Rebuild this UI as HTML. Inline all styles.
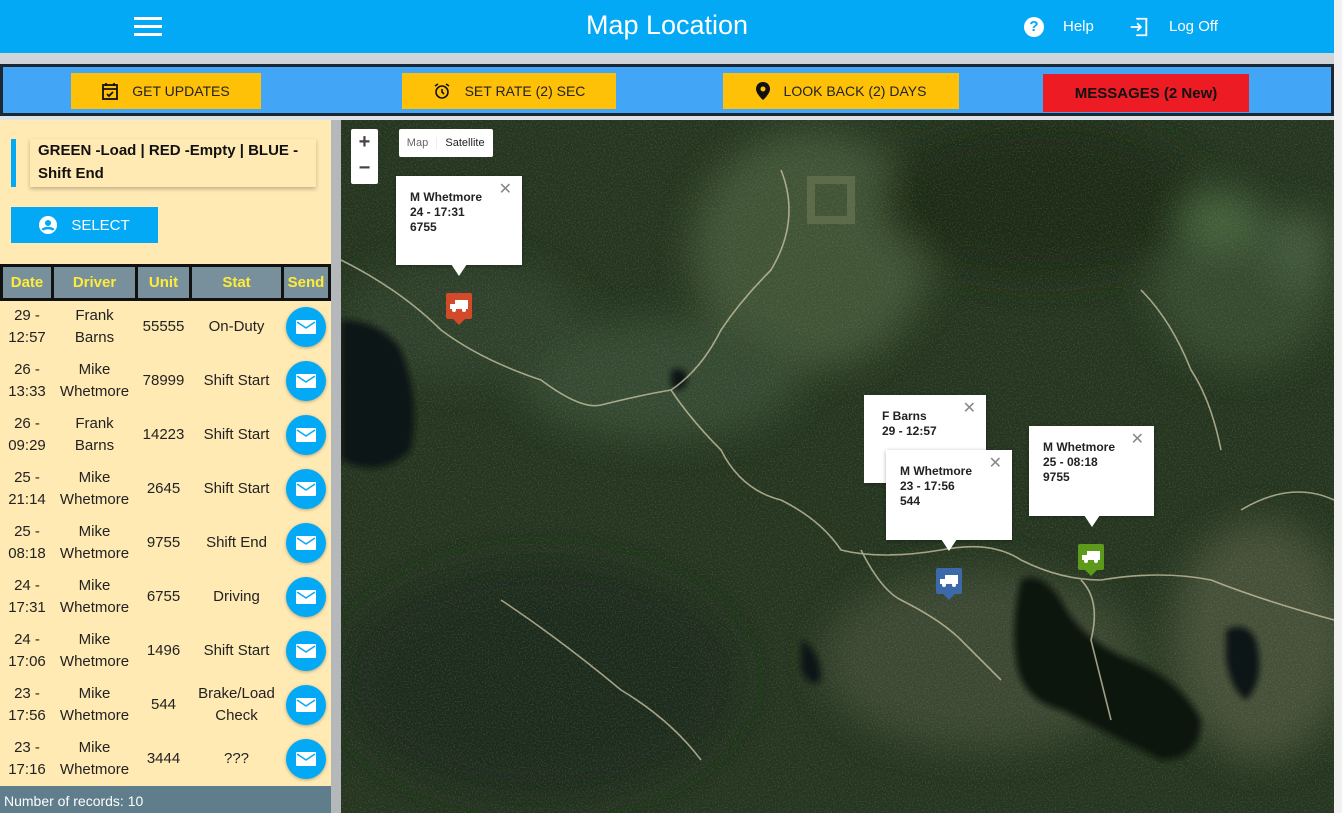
<!DOCTYPE html>
<html><head><meta charset="utf-8"><style>
*{box-sizing:border-box;margin:0;padding:0}
body{width:1342px;height:813px;overflow:hidden;font-family:"Liberation Sans",sans-serif;background:#fff;position:relative}
.hdr{position:absolute;left:0;top:0;width:1334px;height:53px;background:#03a9f4;color:#fff}
.gray{position:absolute;left:0;top:53px;width:1334px;height:11px;background:#cfd4d8}
.tb{position:absolute;left:0;top:64px;width:1334px;height:52px;background:#42a5f5;border:3px solid #1b2733}
.btn{position:absolute;top:6px;height:36px;background:#ffc107;color:#222;font-size:14px;display:flex;align-items:center;justify-content:center;gap:14px}
.strip{position:absolute;left:0;top:116px;width:1334px;height:4px;background:#dde3e6}
.left{position:absolute;left:0;top:120px;width:331px;height:693px;background:#ffeab3}
.div{position:absolute;left:331px;top:120px;width:10px;height:693px;background:#b5b8ba}
.map{position:absolute;left:341px;top:120px;width:993px;height:693px;overflow:hidden;background:#2a3a26}
.sb{position:absolute;left:1334px;top:0;width:8px;height:813px;background:#f1f1f1}
table{position:absolute;left:0;top:144px;width:331px;border-collapse:collapse;font-size:15px;color:#222}
th{background:#78909c;color:#ffeb3b;height:34px;border:3px solid #111;font-size:15px}
td{height:54px;text-align:center;line-height:22px}
.mail{width:40px;height:40px;border-radius:50%;background:#03a9f4;display:inline-flex;align-items:center;justify-content:center;box-shadow:0 1px 3px rgba(0,0,0,.3)}
.pop{position:absolute;background:#fff;font-size:12px;font-weight:bold;color:#222;line-height:15px;padding:14px 14px;box-shadow:0 1px 4px rgba(0,0,0,.3)}
.pop .x{position:absolute;right:10px;top:6px;color:#888;font-size:16px;font-weight:normal}
.pop:after{content:"";position:absolute;left:50%;bottom:-11px;margin-left:-8px;border-left:8px solid transparent;border-right:8px solid transparent;border-top:12px solid #fff}
.mk{position:absolute;width:26px;height:26px;border-radius:2px;display:flex;align-items:center;justify-content:center}
.mk i{position:absolute;left:7px;bottom:-6px;width:0;height:0;border-left:6px solid transparent;border-right:6px solid transparent;border-top:6px solid}
</style></head><body>
<div class="hdr">
 <div style="position:absolute;left:134px;top:17px;width:28px;height:3px;background:#fff;box-shadow:0 8px 0 #fff,0 16px 0 #fff"></div>
 <div style="position:absolute;left:0;width:1334px;top:10px;text-align:center;font-size:27px">Map Location</div>
 <div style="position:absolute;left:1024px;top:17px;width:20px;height:20px;border-radius:50%;background:#fff;color:#03a9f4;font-weight:bold;font-size:15px;text-align:center;line-height:20px">?</div>
 <div style="position:absolute;left:1063px;top:18px;font-size:15px">Help</div>
 <svg style="position:absolute;left:1128px;top:16px" width="22" height="22" viewBox="0 0 24 24" fill="none" stroke="#fff" stroke-width="2"><path d="M9 3h11v18H9M3 12h11M10 8l4 4-4 4"/></svg>
 <div style="position:absolute;left:1169px;top:18px;font-size:15px">Log Off</div>
</div>
<div class="gray"></div>
<div class="tb">
 <div class="btn" style="left:68px;width:190px"><svg width="16" height="18" viewBox="0 0 16 18" fill="none" stroke="#111" stroke-width="1.8"><rect x="1" y="3" width="14" height="14"/><path d="M1 7h14M4 1v3M12 1v3M5 12l2 2 4-4"/></svg>GET UPDATES</div>
 <div class="btn" style="left:399px;width:214px"><svg width="18" height="18" viewBox="0 0 18 18" fill="none" stroke="#111" stroke-width="1.6"><circle cx="9" cy="10" r="6"/><path d="M9 7v3l2 2M2 4l3-2M16 4l-3-2"/></svg>SET RATE (2) SEC</div>
 <div class="btn" style="left:720px;width:236px"><svg width="14" height="18" viewBox="0 0 14 18"><path d="M7 0C3 0 0 3 0 7c0 5 7 11 7 11s7-6 7-11c0-4-3-7-7-7z" fill="#111"/><circle cx="7" cy="7" r="2.5" fill="#ffc107"/></svg>LOOK BACK (2) DAYS</div>
 <div class="btn" style="left:1040px;width:206px;top:7px;height:38px;background:#ed1c24;color:#111;font-weight:bold;font-size:15px">MESSAGES (2 New)</div>
</div>
<div class="strip"></div>
<div class="left">
 <div style="position:absolute;left:11px;top:19px;width:5px;height:48px;background:#03a9f4"></div>
 <div style="position:absolute;left:30px;top:19px;width:286px;height:48px;background:#ffeab3;box-shadow:0 2px 4px rgba(0,0,0,.25);font-weight:bold;font-size:15px;line-height:23px;padding:0 8px;color:#111">GREEN -Load | RED -Empty | BLUE - Shift End</div>
 <div style="position:absolute;left:11px;top:87px;width:147px;height:36px;background:#03a9f4;color:#fff;font-size:15px;display:flex;align-items:center;justify-content:center;gap:14px"><svg width="18" height="18" viewBox="0 0 18 18"><circle cx="9" cy="9" r="9" fill="#fff"/><circle cx="9" cy="7" r="3" fill="#03a9f4"/><path d="M3.5 14c1.5-2.5 9.5-2.5 11 0" stroke="#03a9f4" stroke-width="2.5" fill="none"/></svg>SELECT</div>
 <table>
 <tr><th style="width:51px">Date</th><th style="width:84px">Driver</th><th style="width:54px">Unit</th><th style="width:92px">Stat</th><th>Send</th></tr>
 <tr><td>29 -<br>12:57</td><td>Frank<br>Barns</td><td>55555</td><td>On-Duty</td><td><span class="mail"><svg width="20" height="14"><rect width="20" height="14" rx="1" fill="#fff"/><path d="M1 2l9 6 9-6" stroke="#03a9f4" stroke-width="1.5" fill="none"/></svg></span></td></tr>
 <tr><td>26 -<br>13:33</td><td>Mike<br>Whetmore</td><td>78999</td><td>Shift Start</td><td><span class="mail"><svg width="20" height="14"><rect width="20" height="14" rx="1" fill="#fff"/><path d="M1 2l9 6 9-6" stroke="#03a9f4" stroke-width="1.5" fill="none"/></svg></span></td></tr>
 <tr><td>26 -<br>09:29</td><td>Frank<br>Barns</td><td>14223</td><td>Shift Start</td><td><span class="mail"><svg width="20" height="14"><rect width="20" height="14" rx="1" fill="#fff"/><path d="M1 2l9 6 9-6" stroke="#03a9f4" stroke-width="1.5" fill="none"/></svg></span></td></tr>
 <tr><td>25 -<br>21:14</td><td>Mike<br>Whetmore</td><td>2645</td><td>Shift Start</td><td><span class="mail"><svg width="20" height="14"><rect width="20" height="14" rx="1" fill="#fff"/><path d="M1 2l9 6 9-6" stroke="#03a9f4" stroke-width="1.5" fill="none"/></svg></span></td></tr>
 <tr><td>25 -<br>08:18</td><td>Mike<br>Whetmore</td><td>9755</td><td>Shift End</td><td><span class="mail"><svg width="20" height="14"><rect width="20" height="14" rx="1" fill="#fff"/><path d="M1 2l9 6 9-6" stroke="#03a9f4" stroke-width="1.5" fill="none"/></svg></span></td></tr>
 <tr><td>24 -<br>17:31</td><td>Mike<br>Whetmore</td><td>6755</td><td>Driving</td><td><span class="mail"><svg width="20" height="14"><rect width="20" height="14" rx="1" fill="#fff"/><path d="M1 2l9 6 9-6" stroke="#03a9f4" stroke-width="1.5" fill="none"/></svg></span></td></tr>
 <tr><td>24 -<br>17:06</td><td>Mike<br>Whetmore</td><td>1496</td><td>Shift Start</td><td><span class="mail"><svg width="20" height="14"><rect width="20" height="14" rx="1" fill="#fff"/><path d="M1 2l9 6 9-6" stroke="#03a9f4" stroke-width="1.5" fill="none"/></svg></span></td></tr>
 <tr><td>23 -<br>17:56</td><td>Mike<br>Whetmore</td><td>544</td><td>Brake/Load<br>Check</td><td><span class="mail"><svg width="20" height="14"><rect width="20" height="14" rx="1" fill="#fff"/><path d="M1 2l9 6 9-6" stroke="#03a9f4" stroke-width="1.5" fill="none"/></svg></span></td></tr>
 <tr><td>23 -<br>17:16</td><td>Mike<br>Whetmore</td><td>3444</td><td>???</td><td><span class="mail"><svg width="20" height="14"><rect width="20" height="14" rx="1" fill="#fff"/><path d="M1 2l9 6 9-6" stroke="#03a9f4" stroke-width="1.5" fill="none"/></svg></span></td></tr>
 </table>
 <div style="position:absolute;left:0;top:666px;width:331px;height:27px;background:#607d8b;color:#fff;font-size:14px;padding:7px 4px">Number of records: 10</div>
</div>
<div class="div"></div>
<div class="map">
 <svg width="993" height="693" style="position:absolute;left:0;top:0">
  <defs><filter id="b"><feGaussianBlur stdDeviation="18"/></filter><filter id="s"><feGaussianBlur stdDeviation="3"/></filter>
  <filter id="n"><feTurbulence type="fractalNoise" baseFrequency="0.7" numOctaves="2" seed="3"/><feColorMatrix values="0 0 0 0 0.35  0 0 0 0 0.45  0 0 0 0 0.28  0 0 0 0.6 -0.28"/></filter></defs>
  <rect width="993" height="693" fill="#24341f"/>
  <g filter="url(#b)">
   <ellipse cx="470" cy="130" rx="120" ry="120" fill="#3f5234"/>
   <ellipse cx="320" cy="260" rx="140" ry="60" fill="#354830"/>
   <ellipse cx="900" cy="170" rx="90" ry="80" fill="#35492f"/>
   <ellipse cx="120" cy="200" rx="120" ry="60" fill="#2f3f2a"/>
   <ellipse cx="640" cy="540" rx="160" ry="90" fill="#3b4633"/>
   <ellipse cx="200" cy="560" rx="200" ry="120" fill="#1d2a1a"/>
   <ellipse cx="920" cy="520" rx="90" ry="120" fill="#454f38"/>
   <ellipse cx="700" cy="80" rx="160" ry="80" fill="#1d2a19"/>
   <ellipse cx="880" cy="100" rx="40" ry="30" fill="#45603a"/>
   <ellipse cx="960" cy="130" rx="30" ry="40" fill="#42593a"/>
  </g>
  <rect width="993" height="693" filter="url(#n)"/>
  <g filter="url(#s)">
   <path d="M0 200 Q40 200 60 230 Q80 280 70 330 Q40 360 0 340Z" fill="#0d1612"/>
   <path d="M680 460 Q700 450 720 480 Q740 520 790 540 Q840 560 860 600 Q860 640 820 640 Q780 620 720 590 Q680 580 675 540 Q670 500 680 460Z" fill="#0b1510"/>
   <path d="M885 510 Q905 500 915 520 Q925 560 905 580 Q890 570 885 540Z" fill="#0e1812"/>
   <path d="M460 520 Q480 530 480 560 Q470 570 460 550Z" fill="#0e1812"/>
   <path d="M330 250 Q350 245 345 265 Q335 275 330 265Z" fill="#0e1812"/>
  </g>
  <g fill="none" stroke="#c6bfa0" stroke-width="1.6" opacity=".8">
   <path d="M0 140 Q60 170 100 210 Q140 240 200 260 Q240 290 260 285 Q300 275 330 270 Q350 300 380 330 Q400 370 440 380 Q480 400 500 430 Q540 440 600 430 Q650 420 680 440 Q720 460 760 460 Q820 450 870 460 Q920 480 993 500"/>
   <path d="M520 430 Q540 470 560 480 Q600 500 620 520 Q640 540 660 560"/>
   <path d="M330 270 Q360 250 380 210 Q400 180 430 150 Q460 100 440 50"/>
   <path d="M160 480 Q220 520 280 570 Q330 600 360 640"/>
   <path d="M900 390 Q950 360 993 380"/>
   <path d="M740 460 Q760 480 750 520 Q760 560 770 600"/>
   <path d="M800 170 Q830 200 850 250 Q870 280 880 330"/>
  </g>
  <rect x="470" y="60" width="40" height="40" fill="none" stroke="#6f7a56" stroke-width="8" opacity=".6"/>
 </svg>
 <div style="position:absolute;left:10px;top:9px;width:27px;height:55px;background:#fff;border-radius:2px;font-size:20px;color:#444;text-align:center;line-height:26px;font-weight:bold">+<br>−</div>
 <div style="position:absolute;left:58px;top:9px;width:94px;height:28px;background:#fff;border-radius:2px;font-size:11px;display:flex;align-items:center"><span style="width:38px;text-align:center;color:#666;border-right:1px solid #eee">Map</span><span style="flex:1;text-align:center;color:#222">Satellite</span></div>
 <div class="pop" style="left:55px;top:56px;width:126px;height:89px">M Whetmore<br>24 - 17:31<br>6755<span class="x">✕</span></div>
 <div class="pop" style="left:527px;top:275px;width:118px;height:88px;box-shadow:-4px 0 0 #fff,0 1px 4px rgba(0,0,0,.4)">F Barns<br>29 - 12:57<span class="x">✕</span></div>
 <div class="pop" style="left:545px;top:330px;width:126px;height:90px">M Whetmore<br>23 - 17:56<br>544<span class="x">✕</span></div>
 <div class="pop" style="left:688px;top:306px;width:125px;height:90px">M Whetmore<br>25 - 08:18<br>9755<span class="x">✕</span></div>
 <div class="mk" style="left:105px;top:173px;background:#d24a2a"><i style="color:#d24a2a"></i><svg width="20" height="14"><rect x="6" y="1" width="13" height="9" fill="#fff"/><path d="M1 5h5v5H1z" fill="#fff"/><circle cx="5" cy="11" r="2" fill="#fff"/><circle cx="15" cy="11" r="2" fill="#fff"/></svg></div>
 <div class="mk" style="left:595px;top:448px;background:#3c6aa8"><i style="color:#3c6aa8"></i><svg width="20" height="14"><rect x="6" y="1" width="13" height="9" fill="#fff"/><path d="M1 5h5v5H1z" fill="#fff"/><circle cx="5" cy="11" r="2" fill="#fff"/><circle cx="15" cy="11" r="2" fill="#fff"/></svg></div>
 <div class="mk" style="left:737px;top:424px;background:#5d9a1c"><i style="color:#5d9a1c"></i><svg width="20" height="14"><rect x="6" y="1" width="13" height="9" fill="#fff"/><path d="M1 5h5v5H1z" fill="#fff"/><circle cx="5" cy="11" r="2" fill="#fff"/><circle cx="15" cy="11" r="2" fill="#fff"/></svg></div>
</div>
<div class="sb"></div>
</body></html>
